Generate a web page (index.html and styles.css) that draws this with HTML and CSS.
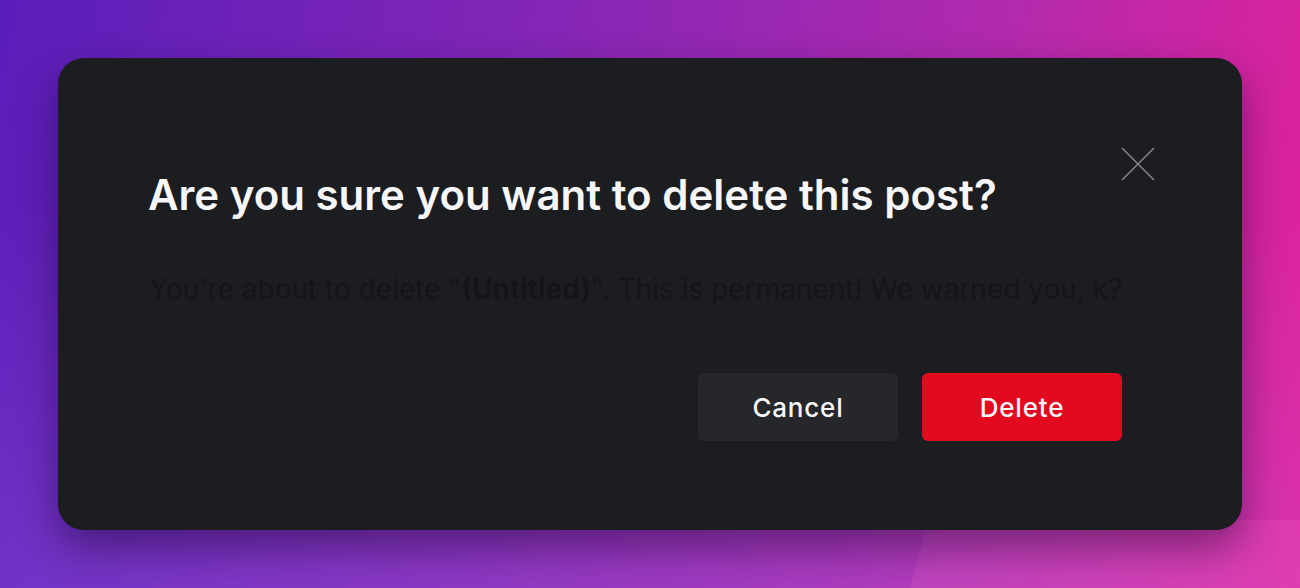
FILE: index.html
```html
<!DOCTYPE html>
<html lang="en">
<head>
<meta charset="utf-8">
<title>Delete post</title>
<link rel="stylesheet" href="styles.css">
</head>
<body>
<div class="backdrop">
  <div class="sheen"></div>
  <div class="modal" role="dialog" aria-labelledby="t">
    <button class="close" aria-label="Close">
      <svg width="34" height="34" viewBox="0 0 34 34"><path d="M1 1L33 33M33 1L1 33" stroke="#8a8b8f" stroke-width="1.4" fill="none"/></svg>
    </button>
    <h1 id="t" class="title">Are you sure you want to delete this post?</h1>
    <p class="desc">You're about to delete "<strong>(Untitled)</strong>". This is permanent! We warned you, k?</p>
    <div class="actions">
      <button class="btn btn-cancel">Cancel</button>
      <button class="btn btn-delete">Delete</button>
    </div>
  </div>
</div>
</body>
</html>
```
FILE: styles.css
```css
* { box-sizing: border-box; }
html, body { margin: 0; height: 100%; }
body {
  font-family: Inter, "Noto Sans", sans-serif;
  overflow: hidden;
}
.backdrop {
  position: relative;
  width: 1300px;
  height: 588px;
  display: flex;
  align-items: center;
  justify-content: center;
  background:
    linear-gradient(180deg, rgba(255,255,255,0) 0%, rgba(255,255,255,0) 35%, rgba(170,130,255,0.20) 100%),
    linear-gradient(100deg, #5a1eba 0%, #8526b6 40%, #b22aad 72%, #e4219a 100%);
  overflow: hidden;
}
.sheen {
  position: absolute;
  left: 910px;
  top: 520px;
  width: 500px;
  height: 68px;
  background: rgba(255, 110, 200, 0.16);
  transform: skewX(-15deg);
  transform-origin: bottom left;
}
.modal {
  position: relative;
  width: 1184px;
  height: 472px;
  background: #1c1d21;
  border-radius: 26px;
  box-shadow: 0 18px 40px rgba(20, 0, 40, 0.45);
  padding: 111px 120px 89px 90px;
  display: flex;
  flex-direction: column;
}
.close {
  position: absolute;
  top: 89px;
  right: 87px;
  width: 34px;
  height: 34px;
  padding: 0;
  border: 0;
  background: none;
  cursor: pointer;
}
.close svg { display: block; }
.title {
  margin: 0;
  color: #f7f7f9;
  font-size: 42px;
  font-weight: 600;
  line-height: 52px;
  letter-spacing: 0;
}
.desc {
  margin: 50px 0 0 1px;
  color: #141518;
  font-size: 28px;
  line-height: 36px;
  white-space: nowrap;
}
.desc strong { font-weight: 700; }
.actions {
  margin-top: auto;
  display: flex;
  justify-content: flex-end;
  gap: 24px;
}
.btn {
  width: 200px;
  height: 68px;
  border: 0;
  border-radius: 6px;
  font-family: inherit;
  font-size: 26px;
  font-weight: 500;
  color: #f7f7f9;
  letter-spacing: 0.8px;
  cursor: pointer;
}
.btn-cancel { background: #26272b; }
.btn-delete { background: #e10a1f; }
```
